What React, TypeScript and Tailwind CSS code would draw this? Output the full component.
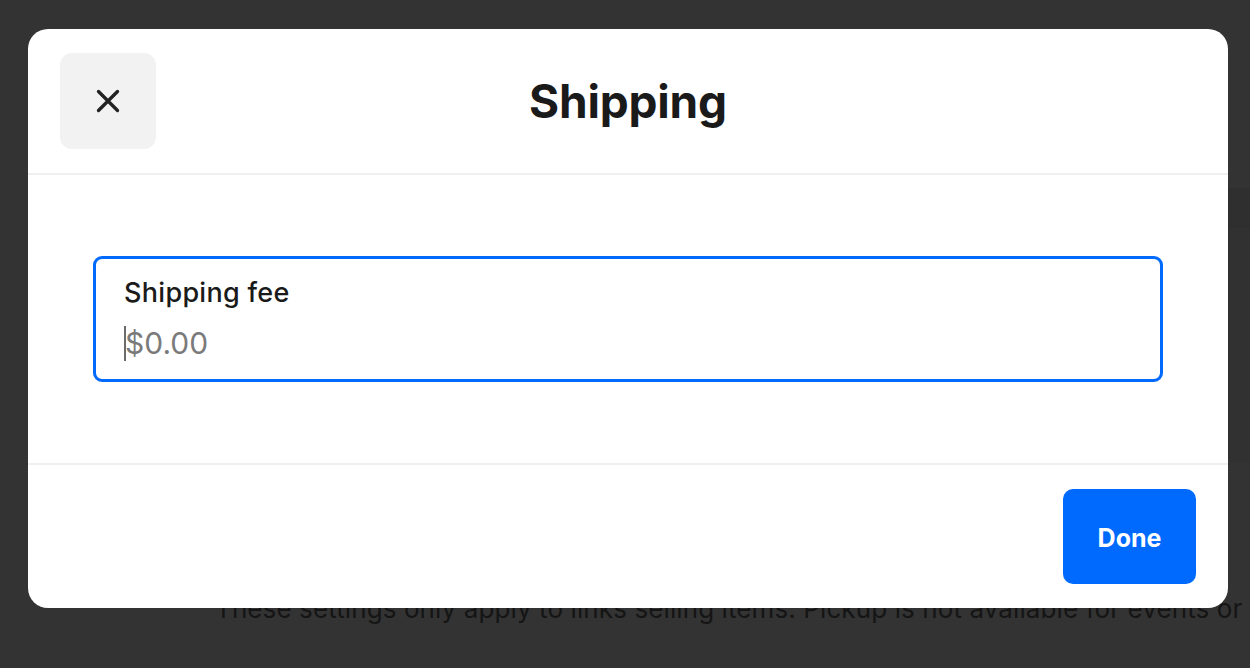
import React from "react";

export default function App() {
  return (
    <div
      className="relative w-full h-[668px] overflow-hidden bg-[#333333]"
      style={{ fontFamily: "Inter, 'Noto Sans', 'Liberation Sans', sans-serif" }}
    >
      {/* underlying page (dimmed) */}
      <div className="flex flex-col h-full">
        <div className="h-[591px] shrink-0 flex justify-end">
          <div className="w-[22px] pt-[188px]">
            <div className="h-[40px] bg-[#2f2f2f]" />
            <div className="h-[235px] bg-[#313131]" />
          </div>
        </div>
        <div className="pl-[215px] overflow-hidden">
          <p className="whitespace-nowrap text-[26px] leading-[36px] tracking-[0.1px] text-[#151515]">
            These settings only apply to links selling items. Pickup is not available for events or donations.
          </p>
        </div>
      </div>

      {/* modal */}
      <div className="absolute left-[28px] top-[29px] w-[1200px] h-[579px] rounded-[20px] bg-white flex flex-col">
        <div className="relative h-[146px] shrink-0 border-b-2 border-[#f0f0f0] flex items-center justify-center">
          <button className="absolute left-[32px] top-[24px] w-[96px] h-[96px] rounded-[12px] bg-[#f2f2f2] flex items-center justify-center">
            <svg width="24" height="24" viewBox="0 0 24 24" fill="none">
              <path d="M2.5 2.5 L21.5 21.5 M21.5 2.5 L2.5 21.5" stroke="#222222" strokeWidth="3.3" strokeLinecap="round" />
            </svg>
          </button>
          <h1 className="text-[46px] leading-none font-bold text-[#1a1a1a] tracking-[-0.2px]">Shipping</h1>
        </div>

        <div className="h-[290px] shrink-0 border-b-2 border-[#f0f0f0] px-[65px] flex items-center">
          <div className="w-full h-[126px] border-[3px] border-[#006aff] rounded-[9px] px-[28px] pt-[17px] pb-[16px] flex flex-col">
            <div className="text-[27px] leading-[34px] font-medium tracking-[0.3px] text-[#1a1a1a]">Shipping fee</div>
            <div className="mt-[13px] h-[40px] flex items-center">
              <span className="w-[2px] h-[35px] bg-[#6b6b6b]" />
              <span className="-ml-[1px] text-[30px] leading-[40px] text-[#7a7a7a]">$0.00</span>
            </div>
          </div>
        </div>

        <div className="flex-1 flex items-start justify-end pt-[24px] pr-[32px]">
          <button className="w-[133px] h-[95px] rounded-[10px] bg-[#006aff] text-white text-[25px] leading-none font-bold pt-[3px]">
            Done
          </button>
        </div>
      </div>
    </div>
  );
}
